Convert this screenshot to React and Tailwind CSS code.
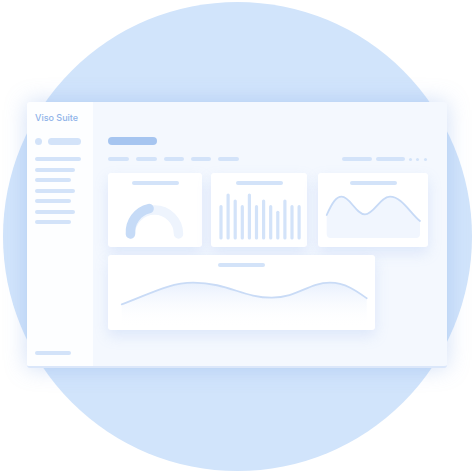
import React from 'react';

const navWidths = [46, 40, 36, 40, 36, 40, 36];
const tabWidths = [21, 21, 20, 20, 21];
const barTops = [33.7, 22, 28, 33.7, 22, 33.7, 28, 33.7, 39.3, 28, 33.7, 33.7];

const Line = ({ w, className = '' }) => (
    <div className={`h-[4px] shrink-0 rounded-full bg-[#d3e3f9] ${className}`} style={{ width: w }} />
);

const Card = ({ width, height, children }) => (
    <div
        className="relative flex shrink-0 flex-col items-center rounded-[3px] bg-white pt-[8px] shadow-[0_6px_14px_rgba(140,175,235,0.22)]"
        style={{ width, height }}
    >
        <Line w={47} />
        {children}
    </div>
);

const Gauge = () => {
    const cx = 46.5;
    const cy = 59;
    const r = 24;
    const a = (103 * Math.PI) / 180;
    const ex = cx + r * Math.cos(a);
    const ey = cy - r * Math.sin(a);
    return (
        <svg className="absolute left-0 top-0" width="94" height="74" viewBox="0 0 94 74">
            <path
                d={`M ${cx - r} ${cy + 2} A ${r} ${r} 0 0 1 ${cx + r} ${cy + 2}`}
                fill="none"
                stroke="#eef4fd"
                strokeWidth="9.5"
                strokeLinecap="round"
            />
            <path
                d={`M ${cx - r} ${cy + 2} A ${r} ${r} 0 0 1 ${ex} ${ey}`}
                fill="none"
                stroke="#c6dbf7"
                strokeWidth="9.5"
                strokeLinecap="round"
            />
        </svg>
    );
};

const Bars = () => (
    <svg className="absolute left-0 top-0" width="96" height="74" viewBox="0 0 96 74">
        {barTops.map((t, i) => (
            <line
                key={i}
                x1={10 + i * 7.1}
                x2={10 + i * 7.1}
                y1={t}
                y2={65}
                stroke="#d3e3f9"
                strokeWidth="3.2"
                strokeLinecap="round"
            />
        ))}
    </svg>
);

const SmallWave = () => {
    const curve = 'M 8.7 42 C 14 30 18 23.7 23.7 23.7 C 32 23.7 38 41.3 47 41.3 C 56 41.3 62 23.7 72 23.7 C 84 23.7 92 40 102 48';
    return (
        <svg className="absolute left-0 top-0" width="110" height="74" viewBox="0 0 110 74">
            <path d={`${curve} L 102 61 Q 102 65 98 65 L 12.7 65 Q 8.7 65 8.7 61 Z`} fill="#f1f6fe" />
            <path d={curve} fill="none" stroke="#c7daf6" strokeWidth="1.8" strokeLinecap="round" />
        </svg>
    );
};

const BigWave = () => {
    const curve = 'M 13.7 49.3 C 40 40 60 27.7 85.3 27.7 C 120 27.7 135 42.7 163.7 42.7 C 190 42.7 200 27.7 222 27.7 C 238 27.7 250 37 258.7 43.3';
    return (
        <svg className="absolute left-0 top-0" width="267" height="75" viewBox="0 0 267 75">
            <defs>
                <linearGradient id="bw" x1="0" y1="0" x2="0" y2="1">
                    <stop offset="0" stopColor="#e8f0fd" />
                    <stop offset="1" stopColor="#ffffff" stopOpacity="0" />
                </linearGradient>
            </defs>
            <path d={`${curve} L 258.7 72 L 13.7 72 Z`} fill="url(#bw)" />
            <path d={curve} fill="none" stroke="#c9dbf6" strokeWidth="1.8" strokeLinecap="round" />
        </svg>
    );
};

export default function App() {
    return (
        <div className="relative h-[474px] w-[474px] overflow-hidden bg-white" style={{ fontFamily: 'Inter, "Open Sans", sans-serif' }}>
            <div className="absolute left-[3px] top-[2px] h-[469px] w-[469px] rounded-full bg-[#d1e4fb]" />

            <div className="absolute left-[27px] top-[102px] flex h-[266px] w-[420px] overflow-hidden rounded-[3px] border-b-2 border-[#dbe7fa] bg-[#f4f8fe] shadow-[0_0_22px_rgba(120,160,230,0.35)]">
                {/* sidebar */}
                <div className="flex w-[66px] shrink-0 flex-col bg-[#fdfeff] px-[8px] pb-[11px] pt-[10px]">
                    <div className="text-[9px] font-medium leading-[12px] text-[#8fb3e9]">Viso Suite</div>
                    <div className="mt-[14px] flex items-center gap-[6px]">
                        <div className="h-[7px] w-[7px] rounded-full bg-[#d3e3f9]" />
                        <div className="h-[7px] w-[33px] rounded-full bg-[#d3e3f9]" />
                    </div>
                    <div className="mt-[12px] flex flex-col gap-[6.5px]">
                        {navWidths.map((w, i) => (
                            <Line key={i} w={w} />
                        ))}
                    </div>
                    <div className="mt-auto">
                        <Line w={36} />
                    </div>
                </div>

                {/* main */}
                <div className="flex flex-1 flex-col pl-[15px] pr-[19px] pt-[35px]">
                    <div className="h-[8px] w-[49px] rounded-full bg-[#a6c5f0]" />
                    <div className="mt-[12px] flex items-center">
                        <div className="flex gap-[7px]">
                            {tabWidths.map((w, i) => (
                                <Line key={i} w={w} />
                            ))}
                        </div>
                        <div className="ml-auto flex items-center pr-[1px]">
                            <Line w={30} />
                            <Line w={29} className="ml-[4px]" />
                            <div className="ml-[4px] h-[3px] w-[3px] rounded-full bg-[#d3e3f9]" />
                            <div className="ml-[4px] h-[3px] w-[3px] rounded-full bg-[#d3e3f9]" />
                            <div className="ml-[5px] h-[3px] w-[3px] rounded-full bg-[#d3e3f9]" />
                        </div>
                    </div>

                    <div className="mt-[12px] flex">
                        <Card width={94} height={74}>
                            <Gauge />
                        </Card>
                        <div className="ml-[9px]">
                            <Card width={96} height={74}>
                                <Bars />
                            </Card>
                        </div>
                        <div className="ml-[11px]">
                            <Card width={110} height={74}>
                                <SmallWave />
                            </Card>
                        </div>
                    </div>

                    <div className="mt-[8px]">
                        <Card width={267} height={75}>
                            <BigWave />
                        </Card>
                    </div>
                </div>
            </div>
        </div>
    );
}
